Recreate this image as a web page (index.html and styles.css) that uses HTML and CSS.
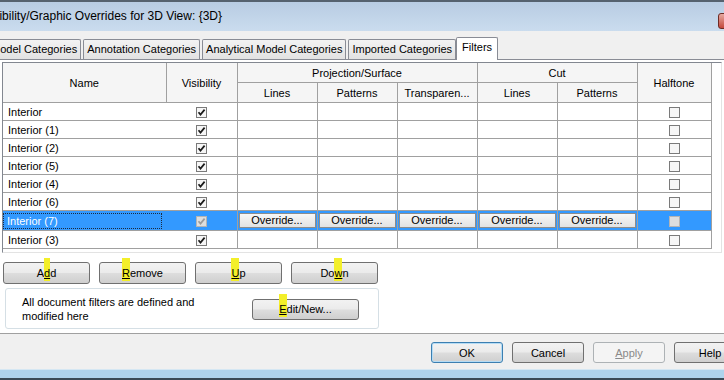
FILE: index.html
```html
<!DOCTYPE html>
<html lang="en">
<head>
  <meta charset="UTF-8" />
  <title>Visibility/Graphic Overrides for 3D View: {3D}</title>
  <link rel="stylesheet" href="styles.css">
</head>
<body>
  <div class="titlebar">
    <span class="title">Visibility/Graphic Overrides for 3D View: {3D}</span>
    <span class="close"></span>
  </div>

  <div class="tabs">
    <div class="tab">Model Categories</div>
    <div class="tab">Annotation Categories</div>
    <div class="tab">Analytical Model Categories</div>
    <div class="tab">Imported Categories</div>
    <div class="tab active">Filters</div>
  </div>

  <div class="page">
    <div class="grid-frame">
      <table class="grid">
        <colgroup>
          <col style="width:163px">
          <col style="width:71px">
          <col style="width:80px">
          <col style="width:80px">
          <col style="width:80px">
          <col style="width:80px">
          <col style="width:80px">
          <col style="width:74px">
        </colgroup>
        <thead>
          <tr>
            <th rowspan="2" class="first">Name</th>
            <th rowspan="2">Visibility</th>
            <th colspan="3">Projection/Surface</th>
            <th colspan="2">Cut</th>
            <th rowspan="2">Halftone</th>
          </tr>
          <tr>
            <th>Lines</th>
            <th>Patterns</th>
            <th>Transparen...</th>
            <th>Lines</th>
            <th>Patterns</th>
          </tr>
        </thead>
        <tbody>
          <tr>
            <td class="name">Interior</td>
            <td class="vis"><svg class="cb" width="11" height="11" viewBox="0 0 11 11"><rect x="0.5" y="0.5" width="10" height="10"/><path d="M2.5 5.2 L4.5 7.6 L8.6 2.6"/></svg></td>
            <td></td><td></td><td></td><td></td><td></td>
            <td class="half"><svg class="cb" width="11" height="11" viewBox="0 0 11 11"><rect x="0.5" y="0.5" width="10" height="10"/></svg></td>
          </tr>
          <tr>
            <td class="name">Interior (1)</td>
            <td class="vis"><svg class="cb" width="11" height="11" viewBox="0 0 11 11"><rect x="0.5" y="0.5" width="10" height="10"/><path d="M2.5 5.2 L4.5 7.6 L8.6 2.6"/></svg></td>
            <td></td><td></td><td></td><td></td><td></td>
            <td class="half"><svg class="cb" width="11" height="11" viewBox="0 0 11 11"><rect x="0.5" y="0.5" width="10" height="10"/></svg></td>
          </tr>
          <tr>
            <td class="name">Interior (2)</td>
            <td class="vis"><svg class="cb" width="11" height="11" viewBox="0 0 11 11"><rect x="0.5" y="0.5" width="10" height="10"/><path d="M2.5 5.2 L4.5 7.6 L8.6 2.6"/></svg></td>
            <td></td><td></td><td></td><td></td><td></td>
            <td class="half"><svg class="cb" width="11" height="11" viewBox="0 0 11 11"><rect x="0.5" y="0.5" width="10" height="10"/></svg></td>
          </tr>
          <tr>
            <td class="name">Interior (5)</td>
            <td class="vis"><svg class="cb" width="11" height="11" viewBox="0 0 11 11"><rect x="0.5" y="0.5" width="10" height="10"/><path d="M2.5 5.2 L4.5 7.6 L8.6 2.6"/></svg></td>
            <td></td><td></td><td></td><td></td><td></td>
            <td class="half"><svg class="cb" width="11" height="11" viewBox="0 0 11 11"><rect x="0.5" y="0.5" width="10" height="10"/></svg></td>
          </tr>
          <tr>
            <td class="name">Interior (4)</td>
            <td class="vis"><svg class="cb" width="11" height="11" viewBox="0 0 11 11"><rect x="0.5" y="0.5" width="10" height="10"/><path d="M2.5 5.2 L4.5 7.6 L8.6 2.6"/></svg></td>
            <td></td><td></td><td></td><td></td><td></td>
            <td class="half"><svg class="cb" width="11" height="11" viewBox="0 0 11 11"><rect x="0.5" y="0.5" width="10" height="10"/></svg></td>
          </tr>
          <tr>
            <td class="name">Interior (6)</td>
            <td class="vis"><svg class="cb" width="11" height="11" viewBox="0 0 11 11"><rect x="0.5" y="0.5" width="10" height="10"/><path d="M2.5 5.2 L4.5 7.6 L8.6 2.6"/></svg></td>
            <td></td><td></td><td></td><td></td><td></td>
            <td class="half"><svg class="cb" width="11" height="11" viewBox="0 0 11 11"><rect x="0.5" y="0.5" width="10" height="10"/></svg></td>
          </tr>
          <tr class="selected">
            <td class="name"><span class="focus">Interior (7)</span></td>
            <td class="vis"><svg class="cb off" width="11" height="11" viewBox="0 0 11 11"><rect x="0.5" y="0.5" width="10" height="10"/><path d="M2.5 5.2 L4.5 7.6 L8.6 2.6"/></svg></td>
            <td class="ovr-cell"><div class="ovr">Override...</div></td>
            <td class="ovr-cell"><div class="ovr">Override...</div></td>
            <td class="ovr-cell"><div class="ovr">Override...</div></td>
            <td class="ovr-cell"><div class="ovr">Override...</div></td>
            <td class="ovr-cell"><div class="ovr">Override...</div></td>
            <td class="half"><svg class="cb off" width="11" height="11" viewBox="0 0 11 11"><rect x="0.5" y="0.5" width="10" height="10"/></svg></td>
          </tr>
          <tr>
            <td class="name">Interior (3)</td>
            <td class="vis"><svg class="cb" width="11" height="11" viewBox="0 0 11 11"><rect x="0.5" y="0.5" width="10" height="10"/><path d="M2.5 5.2 L4.5 7.6 L8.6 2.6"/></svg></td>
            <td></td><td></td><td></td><td></td><td></td>
            <td class="half"><svg class="cb" width="11" height="11" viewBox="0 0 11 11"><rect x="0.5" y="0.5" width="10" height="10"/></svg></td>
          </tr>
        </tbody>
      </table>
    </div>

    <div class="row-buttons">
      <button class="btn wide">A<span class="hl">d</span>d</button>
      <button class="btn wide"><span class="hl">R</span>emove</button>
      <button class="btn wide"><span class="hl">U</span>p</button>
      <button class="btn wide">Do<span class="hl">w</span>n</button>
    </div>

    <div class="info">
      <p>All document filters are defined and<br>modified here</p>
      <button class="btn edit"><span class="hl">E</span>dit/New...</button>
    </div>
  </div>

  <div class="footer">
    <button class="btn default">OK</button>
    <button class="btn">Cancel</button>
    <button class="btn" disabled><u>A</u>pply</button>
    <button class="btn">Help</button>
  </div>
  <div class="bottom-edge"></div>
</body>
</html>
```

FILE: styles.css
```css
body {
  margin: 0;
  width: 724px;
  height: 380px;
  overflow: hidden;
  font-family: "Liberation Sans", Arial, sans-serif;
  font-size: 11px;
  color: #000;
  background: #f0f0f0;
}

/* window title */
.titlebar {
  height: 31px;
  box-sizing: border-box;
  border-top: 2px solid #55626f;
  background: linear-gradient(#b8cce3, #cadcee);
  display: flex;
  justify-content: space-between;
}
.title {
  font-size: 12px;
  margin-left: -17px;
  margin-top: 7px;
}
.close {
  width: 43px;
  height: 14px;
  margin-top: 11px;
  margin-right: -39px;
  border: 1px solid #6e2b24;
  border-radius: 3px;
  background: linear-gradient(#e6aaa2, #c4473b);
}

/* tab strip */
.tabs {
  display: flex;
  align-items: flex-end;
  gap: 2px;
  height: 28px;
  box-sizing: border-box;
  margin-left: -13px;
}
.tab {
  height: 19px;
  line-height: 18px;
  padding: 0 3px;
  border: 1px solid #898c95;
  border-bottom: none;
  border-radius: 2px 2px 0 0;
  background: linear-gradient(#f3f3f3, #e2e2e2);
  white-space: nowrap;
}
.tab.active {
  height: 22px;
  line-height: 19px;
  margin: 0 -2px -1px;
  padding: 0 5px;
  background: #fff;
}

/* tab page */
.page {
  height: 274px;
  box-sizing: border-box;
  border-top: 1px solid #898c95;
  background: #fff;
  overflow: hidden;
}
.grid-frame {
  margin: 2px 0 0 2px;
  width: 720px;
  height: 191px;
  box-sizing: border-box;
  border: 1px solid;
  border-color: #828790 #e3e3e3 #e3e3e3 #828790;
  background: #fff;
}
.grid {
  border-collapse: collapse;
  table-layout: fixed;
  width: 708px;
}
.grid th,
.grid td {
  border: 1px solid #a0a0a0;
  padding: 0;
  white-space: nowrap;
  overflow: hidden;
}
.grid thead tr:first-child th {
  border-top-style: hidden;
}
.grid .first,
.grid .name {
  border-left-style: hidden;
}
.grid th {
  background: #f5f5f5;
  font-weight: normal;
  height: 19px;
}
.grid td {
  height: 17px;
}
.grid .name {
  padding-left: 5px;
  border-right-style: hidden;
}
.grid .vis {
  border-left-style: hidden;
}
.grid .vis,
.grid .half {
  text-align: center;
}
.cb {
  display: inline-block;
  vertical-align: middle;
}
.cb rect {
  fill: #f6f6f6;
  stroke: #7a7a7a;
}
.cb path {
  fill: none;
  stroke: #1a1a1a;
  stroke-width: 1.7;
}
.cb.off rect {
  fill: #dedede;
  stroke: #b4b4b4;
}
.cb.off path {
  stroke: #9c9c9c;
}

.selected td {
  background: #3399ff;
  color: #fff;
}
.focus {
  display: inline-block;
  margin-left: -4px;
  padding: 1px 3px;
  width: 151px;
  outline: 1px dotted #1a2a40;
}
.ovr-cell {
  padding: 1px !important;
}
.ovr {
  height: 15px;
  box-sizing: border-box;
  border: 1px solid #8c8c8c;
  background: linear-gradient(#f7f7f7, #e2e2e2);
  color: #000;
  text-align: center;
  line-height: 13px;
}

/* buttons */
.btn {
  font-family: inherit;
  font-size: 11px;
  color: #000;
  height: 22px;
  box-sizing: border-box;
  padding: 0;
  border: 1px solid #707070;
  border-radius: 3px;
  background: linear-gradient(#f2f2f2 0%, #ebebeb 48%, #dddddd 52%, #cfcfcf 100%);
}
.btn:disabled {
  color: #8a8a8a;
  border-color: #adb2b5;
  background: #f4f4f4;
}
.btn.default {
  border-color: #3c7fb1;
  box-shadow: inset 0 0 0 1px #b5dcf5;
}
.hl {
  background: #f3ef2a;
  padding: 9px 0 2px;
  text-decoration: underline;
}

.row-buttons {
  display: flex;
  gap: 9px;
  margin: 9px 0 0 3px;
}
.row-buttons .btn {
  width: 87px;
}

.info {
  display: flex;
  align-items: center;
  justify-content: space-between;
  margin: 4px 0 0 5px;
  width: 374px;
  height: 41px;
  box-sizing: border-box;
  padding: 1px 19px 0 16px;
  border: 1px solid #d5dfe5;
  border-radius: 3px;
}
.info p {
  margin: 0;
  line-height: 14px;
}
.info .edit {
  width: 107px;
  height: 21px;
}

/* dialog footer */
.footer {
  height: 36px;
  box-sizing: border-box;
  border-top: 1px solid #a0a0a0;
  display: flex;
  gap: 9px;
  padding: 8px 0 0 431px;
}
.footer .btn {
  width: 72px;
  height: 21px;
  flex: none;
}
.bottom-edge {
  height: 11px;
  background: linear-gradient(#d5e7f3 0 1px, #afd3ec 1px 9px, #3b4a56 9px);
}
```
